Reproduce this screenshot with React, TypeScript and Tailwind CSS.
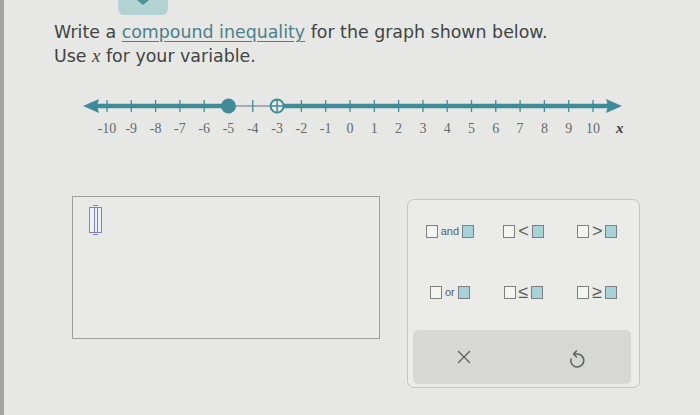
import { X } from 'lucide-react';

const TEAL = '#3f8c98';
const pos = (v: number) => 29 + (v + 10) * 24.3;

const NumberLine = () => {
    const ticks = Array.from({ length: 21 }, (_, i) => i - 10);
    return (
        <svg width="560" height="48" viewBox="0 0 560 48" className="block">
            {/* thin gap segment between -5 and -3 */}
            <line x1={pos(-5)} y1="14" x2={pos(-3)} y2="14" stroke="#8f9a9a" strokeWidth="1.5" />
            <line x1="14" y1="14" x2={pos(-5)} y2="14" stroke={TEAL} strokeWidth="4.5" />
            <line x1={pos(-3)} y1="14" x2="532" y2="14" stroke={TEAL} strokeWidth="4.5" />
            <polygon points="5,14 21,7 19,14 21,21" fill={TEAL} />
            <polygon points="544,14 528,7 530,14 528,21" fill={TEAL} />
            {ticks.map((t) => (
                <line key={t} x1={pos(t)} y1="8" x2={pos(t)} y2="20" stroke={TEAL} strokeWidth="1.3" />
            ))}
            <circle cx={pos(-5)} cy="14" r="7.5" fill={TEAL} />
            <circle cx={pos(-3)} cy="14" r="6.5" fill="#e9ecea" stroke={TEAL} strokeWidth="2" />
            <line x1={pos(-3)} y1="8" x2={pos(-3)} y2="20" stroke={TEAL} strokeWidth="1.5" />
            <line x1={pos(-3) - 6} y1="14" x2={pos(-3) + 6} y2="14" stroke={TEAL} strokeWidth="1.5" />
            {ticks.map((t) => (
                <text
                    key={t}
                    x={pos(t)}
                    y="41"
                    textAnchor="middle"
                    fontFamily="'Liberation Serif', serif"
                    fontSize="14"
                    fill="#666969"
                >
                    {t < 0 ? `-${-t}` : t}
                </text>
            ))}
            <text x="538" y="41" fontFamily="'Liberation Serif', serif" fontSize="15" fontWeight="bold" fontStyle="italic" fill="#3f4242">
                x
            </text>
        </svg>
    );
};

const Box = ({ filled = false }: { filled?: boolean }) => (
    <span
        className={`inline-block w-[12px] h-[13px] border-[1.5px] border-[#7d8080] ${filled ? 'bg-[#a7d3d8]' : 'bg-[#f4f5f3]'}`}
    />
);

const KeyButton = ({ op, small = false }: { op: string; small?: boolean }) => (
    <div className="flex items-center justify-center h-[30px]">
        <div className="flex items-center gap-[2px]">
            <Box />
            <span
                className={`${small ? 'text-[11px] px-[1px]' : 'text-[18px] px-[1px]'} text-[#5a5d5d] leading-none`}
                style={{ fontFamily: "'Liberation Sans', Arial, sans-serif" }}
            >
                {op}
            </span>
            <Box filled />
        </div>
    </div>
);

const UndoIcon = () => (
    <svg width="18" height="20" viewBox="0 0 18 20" fill="none" stroke="#5d6262" strokeWidth="1.6" strokeLinecap="round" strokeLinejoin="round">
        <path d="M6 5 H9 A6.5 6.5 0 1 1 3 10" />
        <path d="M8.5 2 L5.5 5 L8.5 8" />
    </svg>
);

export default function App() {
    return (
        <div
            className="relative w-[700px] h-[415px] overflow-hidden bg-[#e7e8e5] border-l-[4px] border-[#a3a6a4]"
            style={{ fontFamily: "'DejaVu Sans', Verdana, sans-serif" }}
        >
            {/* top tab */}
            <div className="absolute left-[114px] top-0 w-[50px] h-[15px] rounded-b-[6px] bg-[#b2d3d1] flex justify-center">
                <svg width="12" height="6" viewBox="0 0 12 6">
                    <polygon points="0,0 12,0 6,5" fill="#4b9298" />
                </svg>
            </div>

            <div className="pl-[50px] pt-[20px] text-[#404444] text-[17.4px] leading-[24px]">
                <p>
                    Write a{' '}
                    <span className="text-[#4c7f8b] underline decoration-[#4c7f8b] underline-offset-[3px]">compound inequality</span>{' '}
                    for the graph shown below.
                </p>
                <p>
                    Use <span className="italic text-[19px]" style={{ fontFamily: "'Liberation Serif', serif" }}>x</span> for your variable.
                </p>
            </div>

            <div className="ml-[74px] mt-[24px]">
                <NumberLine />
            </div>

            <div className="flex items-start mt-[56px] ml-[68px]">
                {/* answer box */}
                <div className="w-[308px] h-[143px] border border-[#9c9e9c] bg-[#e9eae7] pt-[10px] pl-[16px]">
                    <div className="relative w-[13px] h-[26px] border-[1.5px] border-[#7f82c6] bg-[#eef0f6] flex justify-center">
                        <div className="w-[4px] h-full border-x border-[#7f82c6]" />
                        <div className="absolute -top-[3px] left-[3px] w-[5px] h-[1px] bg-[#7f82c6]" />
                        <div className="absolute -bottom-[3px] left-[3px] w-[5px] h-[1px] bg-[#7f82c6]" />
                    </div>
                </div>

                {/* keypad */}
                <div className="ml-[27px] mt-[3px] w-[233px] h-[189px] rounded-[7px] border border-[#c4c6c4] bg-[#ebecea] px-[5px] pt-[16px] pb-[3px] flex flex-col">
                    <div className="grid grid-cols-3 gap-y-[31px]">
                        <KeyButton op="and" small />
                        <KeyButton op="<" />
                        <KeyButton op=">" />
                        <KeyButton op="or" small />
                        <KeyButton op="≤" />
                        <KeyButton op="≥" />
                    </div>
                    <div className="mt-auto mr-[3px] h-[54px] rounded-[5px] bg-[#d7d8d6] grid grid-cols-2">
                        <div className="flex items-center justify-center pr-[8px]">
                            <X className="w-[22px] h-[22px] text-[#5d6262]" strokeWidth={1.5} />
                        </div>
                        <div className="flex items-center justify-center pt-[3px]">
                            <UndoIcon />
                        </div>
                    </div>
                </div>
            </div>
        </div>
    );
}
